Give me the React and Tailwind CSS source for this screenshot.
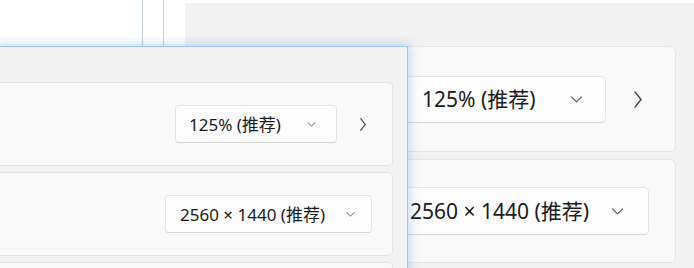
import React from "react";

const font = { fontFamily: '"Noto Sans", "Noto Sans CJK SC", sans-serif' };

function ChevronDown({ w, h, sw = 1 }) {
  return (
    <svg width={w} height={h} viewBox="0 0 10 6" fill="none" className="shrink-0">
      <polyline points="0.7,0.7 5,5 9.3,0.7" stroke="#5c5c5c" strokeWidth={sw} strokeLinecap="round" strokeLinejoin="round" />
    </svg>
  );
}

function ChevronRight({ w, h, sw = 1.2 }) {
  return (
    <svg width={w} height={h} viewBox="0 0 6 13" fill="none" className="shrink-0">
      <polyline points="0.7,0.7 5.3,6.5 0.7,12.3" stroke="#444" strokeWidth={sw} strokeLinecap="round" strokeLinejoin="round" />
    </svg>
  );
}

export default function App() {
  return (
    <div className="relative w-[694px] h-[268px] overflow-hidden bg-white text-[#1b1b1b]" style={font}>
      {/* background page */}
      <div className="flex h-full">
        <div className="w-[185px] shrink-0 flex">
          <div className="w-[143px] border-r border-[#c9d2dc]" />
          <div className="w-[21px] border-r border-[#c9d2dc]" />
        </div>
        <div className="flex-1 mt-[3px] bg-[#f2f2f2] pl-[20px] pr-[18px] pt-[43px] flex flex-col gap-[7px]">
          <div className="h-[106px] shrink-0 rounded-[6px] bg-[#f9f9f9] border border-[#e6e6e6] flex items-center justify-end pr-[32px]">
            <div className="h-[47px] w-[201px] rounded-[5px] bg-[#fdfdfd] border border-[#e5e5e5] border-b-[#d6d6d6] flex items-center pl-[16px] pr-[22px]">
              <span className="text-[21px] leading-none flex-1 whitespace-nowrap">125% (推荐)</span>
              <ChevronDown w={13} h={7} sw={1} />
            </div>
            <div className="ml-[27px]">
              <ChevronRight w={10} h={17} sw={1.1} />
            </div>
          </div>
          <div className="h-[104px] shrink-0 rounded-[6px] bg-[#f9f9f9] border border-[#e6e6e6] flex items-center justify-end pr-[26px]">
            <div className="h-[48px] w-[256px] rounded-[5px] bg-[#fdfdfd] border border-[#e5e5e5] border-b-[#d6d6d6] flex items-center pl-[16px] pr-[24px]">
              <span className="text-[21px] leading-none flex-1 whitespace-nowrap">2560 × 1440 (推荐)</span>
              <ChevronDown w={13} h={7} sw={1} />
            </div>
          </div>
        </div>
      </div>

      {/* front window */}
      <div className="absolute left-[-2px] top-[46px] w-[410px] h-[230px] bg-[#f2f2f2] border-t border-r border-[#9cc4ef] shadow-[0_0_9px_2px_rgba(90,160,235,0.35)] pt-[35px] pr-[14px] flex flex-col gap-[6px]">
        <div className="h-[84px] shrink-0 rounded-r-[5px] bg-[#f9f9f9] border border-l-0 border-[#e3e3e3] flex items-center justify-end pr-[26px]">
          <div className="h-[38px] w-[162px] rounded-[4px] bg-[#fdfdfd] border border-[#e5e5e5] border-b-[#d4d4d4] flex items-center pl-[13px] pr-[20px]">
            <span className="text-[17px] leading-none flex-1 whitespace-nowrap">125% (推荐)</span>
            <ChevronDown w={9} h={5} sw={1.1} />
          </div>
          <div className="ml-[23px]">
            <ChevronRight w={6} h={13} sw={1.2} />
          </div>
        </div>
        <div className="h-[84px] shrink-0 rounded-r-[5px] bg-[#f9f9f9] border border-l-0 border-[#e3e3e3] flex items-center justify-end pr-[20px]">
          <div className="h-[38px] w-[207px] rounded-[4px] bg-[#fdfdfd] border border-[#e5e5e5] border-b-[#d4d4d4] flex items-center pl-[14px] pr-[16px]">
            <span className="text-[17px] leading-none flex-1 whitespace-nowrap">2560 × 1440 (推荐)</span>
            <ChevronDown w={9} h={5} sw={1.1} />
          </div>
        </div>
        <div className="h-[84px] shrink-0 rounded-r-[5px] bg-[#f9f9f9] border border-l-0 border-[#e3e3e3]" />
      </div>
    </div>
  );
}
